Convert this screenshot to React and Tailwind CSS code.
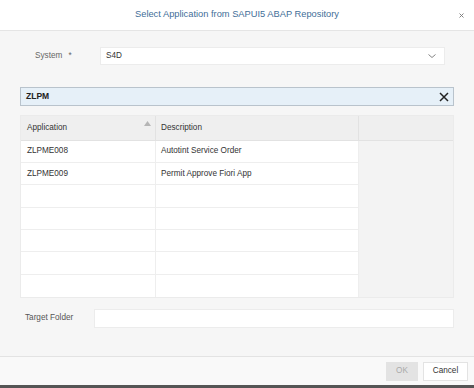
import React from "react";

const rows = [
  ["ZLPME008", "Autotint Service Order"],
  ["ZLPME009", "Permit Approve Fiori App"],
  ["", ""],
  ["", ""],
  ["", ""],
  ["", ""],
  ["", ""],
];

export default function App() {
  return (
    <div
      className="w-[474px] h-[388px] flex flex-col bg-white text-[#333] overflow-hidden"
      style={{ fontFamily: '"Liberation Sans", Arial, sans-serif' }}
    >
      {/* Title bar */}
      <div className="relative h-[31px] flex items-center justify-center border-b border-[#e5e5e5]">
        <span className="text-[9.3px] text-[#3f6e98]">Select Application from SAPUI5 ABAP Repository</span>
        <svg className="absolute right-[10px] top-[13px]" width="5" height="5" viewBox="0 0 5 5" stroke="#777" strokeWidth="0.9">
          <path d="M0.5 0.5 L4.5 4.5 M4.5 0.5 L0.5 4.5" />
        </svg>
      </div>

      {/* Body */}
      <div className="flex-1 bg-[#f6f6f6] flex flex-col px-[20px] pt-[16px]">
        <div className="flex items-center h-[18px] ml-[15px]">
          <span className="w-[65px] text-[8.2px] text-[#666]">
            System <span className="ml-[4px]">*</span>
          </span>
          <div className="w-[345px] h-[18px] bg-white border border-[#ececec] flex items-center justify-between pl-[5px] pr-[8px]">
            <span className="text-[8.2px]">S4D</span>
            <svg width="8" height="4" viewBox="0 0 8 4" fill="none" stroke="#777" strokeWidth="0.9">
              <path d="M0.5 0.5 L4 3.5 L7.5 0.5" />
            </svg>
          </div>
        </div>

        <div className="mt-[22px] h-[19px] bg-[#e6f0f8] border border-[#b9c3cc] flex items-center justify-between pl-[5px] pr-[4px]">
          <span className="text-[8.5px] font-semibold text-[#222]">ZLPM</span>
          <svg width="10" height="10" viewBox="0 0 10 10" stroke="#222" strokeWidth="1.5">
            <path d="M1 1 L9 9 M9 1 L1 9" />
          </svg>
        </div>

        {/* Table */}
        <div className="mt-[9px] h-[183px] flex border border-[#ebebeb]">
          <div className="w-[338px] flex flex-col">
            <div className="h-[25px] flex bg-[#efefef] border-b border-[#e2e2e2] text-[8.2px]">
              <div className="w-[135px] relative flex items-center pl-[6px] border-r border-[#e2e2e2]">
                Application
                <svg className="absolute right-[4px] top-[5px]" width="7" height="5" viewBox="0 0 7 5">
                  <path d="M3.5 0 L7 5 L0 5 Z" fill="#b5b5b5" />
                </svg>
              </div>
              <div className="flex-1 flex items-center pl-[5px] border-r border-[#e2e2e2]">Description</div>
            </div>
            {rows.map((r, i) => (
              <div key={i} className="h-[22.5px] flex bg-white border-b border-[#eeeeee] text-[8.2px] last:border-b-0">
                <div className="w-[135px] flex items-center pl-[6px] border-r border-[#eeeeee]">{r[0]}</div>
                <div className="flex-1 flex items-center pl-[5px] border-r border-[#eeeeee]">{r[1]}</div>
              </div>
            ))}
          </div>
          <div className="flex-1 flex flex-col bg-[#f3f3f3]">
            <div className="h-[25px] bg-[#efefef] border-b border-[#e2e2e2]" />
          </div>
        </div>

        <div className="mt-[11px] flex items-center">
          <span className="w-[74px] pl-[5px] text-[8.2px] text-[#555]">Target Folder</span>
          <div className="flex-1 h-[19px] bg-white border border-[#ececec]" />
        </div>
      </div>

      {/* Footer */}
      <div className="h-[29px] bg-[#f9f9f9] border-t border-[#e3e3e3] flex items-center justify-end gap-[5px] pr-[6px]">
        <div className="w-[32px] h-[19px] bg-[#e3e3e3] flex items-center justify-center text-[8.2px] text-[#aaa]">OK</div>
        <div className="w-[45px] h-[19px] bg-white border border-[#e3e3e3] flex items-center justify-center text-[8.2px] text-[#333]">Cancel</div>
      </div>
      <div className="h-[3px] bg-[#555]" />
    </div>
  );
}
